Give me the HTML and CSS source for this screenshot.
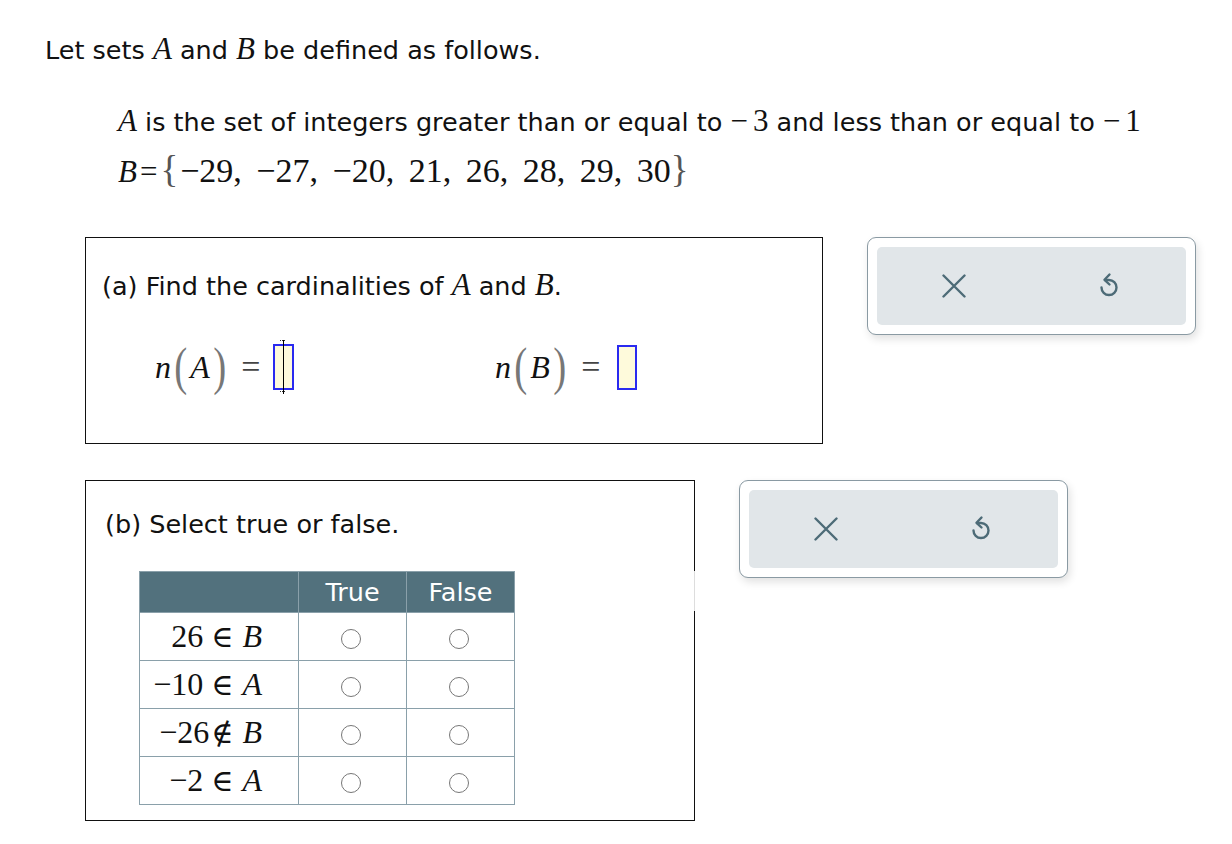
FILE: index.html
```html
<!DOCTYPE html>
<html>
<head>
<meta charset="utf-8">
<link rel="stylesheet" href="styles.css">
</head>
<body>
<div class="page">
  <p class="intro">Let sets <span class="mv">A</span> and <span class="mv">B</span> be defined as follows.</p>
  <div class="defs">
    <p class="def"><span class="mv">A</span> is the set of integers greater than or equal to <span class="mn">−<span class="num">3</span></span> and less than or equal to <span class="mn">−<span class="num">1</span></span></p>
    <p class="def"><span class="mv">B</span><span class="mn eq">=</span><span class="brace">{</span><span class="mn list">−29, −27, −20, 21, 26, 28, 29, 30</span><span class="brace">}</span></p>
  </div>

  <div class="row row-a">
    <div class="qbox qbox-a">
      <p class="qtitle">(a) Find the cardinalities of <span class="mv">A</span> and <span class="mv">B</span>.</p>
      <div class="formulas">
        <div class="formula">
          <span class="mv">n</span><span class="paren">(</span><span class="mv">A</span><span class="paren">)</span><span class="mn eqs">=</span>
          <span class="answer active"><span class="caret"></span></span>
        </div>
        <div class="formula fb">
          <span class="mv">n</span><span class="paren">(</span><span class="mv">B</span><span class="paren">)</span><span class="mn eqs">=</span>
          <span class="answer"></span>
        </div>
      </div>
    </div>
    <div class="tools">
      <div class="tools-inner">
        <button class="tbtn" aria-label="Clear">
          <svg width="24" height="24" viewBox="0 0 24 24"><path d="M1.5 1.5 L22.5 22.5 M22.5 1.5 L1.5 22.5" stroke="#4d6b77" stroke-width="2.4" stroke-linecap="round" fill="none"/></svg>
        </button>
        <button class="tbtn" aria-label="Undo">
          <svg width="24" height="30" viewBox="0 0 24 30"><path d="M8.5 9 H12 A7.5 7.5 0 1 1 4.5 16.5" stroke="#4d6b77" stroke-width="2.4" stroke-linecap="round" fill="none"/><path d="M12.5 3.5 L7.5 8.8 L12.5 13.5" stroke="#4d6b77" stroke-width="2.4" stroke-linecap="round" stroke-linejoin="round" fill="none"/></svg>
        </button>
      </div>
    </div>
  </div>

  <div class="row row-b">
    <div class="qbox qbox-b">
      <p class="qtitle">(b) Select true or false.</p>
      <table class="tf">
        <thead>
          <tr><th class="c0"></th><th class="c1">True</th><th class="c2">False</th></tr>
        </thead>
        <tbody>
          <tr><td class="stmt"><span class="mn">26</span><span class="rel">∈</span><span class="mv">B</span></td><td><span class="radio"></span></td><td><span class="radio"></span></td></tr>
          <tr><td class="stmt"><span class="mn">−10</span><span class="rel">∈</span><span class="mv">A</span></td><td><span class="radio"></span></td><td><span class="radio"></span></td></tr>
          <tr><td class="stmt"><span class="mn">−26</span><span class="rel nr">∉</span><span class="mv">B</span></td><td><span class="radio"></span></td><td><span class="radio"></span></td></tr>
          <tr><td class="stmt"><span class="mn">−2</span><span class="rel">∈</span><span class="mv">A</span></td><td><span class="radio"></span></td><td><span class="radio"></span></td></tr>
        </tbody>
      </table>
      <span class="edge-mark"></span>
    </div>
    <div class="tools">
      <div class="tools-inner">
        <button class="tbtn" aria-label="Clear">
          <svg width="24" height="24" viewBox="0 0 24 24"><path d="M1.5 1.5 L22.5 22.5 M22.5 1.5 L1.5 22.5" stroke="#4d6b77" stroke-width="2.4" stroke-linecap="round" fill="none"/></svg>
        </button>
        <button class="tbtn" aria-label="Undo">
          <svg width="24" height="30" viewBox="0 0 24 30"><path d="M8.5 9 H12 A7.5 7.5 0 1 1 4.5 16.5" stroke="#4d6b77" stroke-width="2.4" stroke-linecap="round" fill="none"/><path d="M12.5 3.5 L7.5 8.8 L12.5 13.5" stroke="#4d6b77" stroke-width="2.4" stroke-linecap="round" stroke-linejoin="round" fill="none"/></svg>
        </button>
      </div>
    </div>
  </div>
</div>
</body>
</html>
```

FILE: styles.css
```css
* { box-sizing: border-box; }
html, body { margin: 0; padding: 0; background: #fff; }
body {
  font-family: "DejaVu Sans", Verdana, sans-serif;
  font-size: 25.5px;
  color: #111;
}
p { margin: 0; }
.page { padding: 34px 0 0 45px; }

.mv {
  font-family: "Liberation Serif", "DejaVu Serif", serif;
  font-style: italic;
  font-size: 31px;
}
.mn {
  font-family: "Liberation Serif", "DejaVu Serif", serif;
  font-size: 31px;
}
.num { margin-left: 5px; }
.rel {
  font-family: "DejaVu Serif", "Liberation Serif", serif;
  font-size: 30px;
  margin: 0 9px 0 8px;
}
.rel.nr { margin-left: 2px; }

.intro { line-height: 30px; }

.defs { padding: 41px 0 0 73px; }
.def { line-height: 30px; }
.def + .def { margin-top: 18px; }
.def .eq { margin: 0 3px 0 3px; }
.list { word-spacing: 6px; margin-left: 2px; font-size: 34px; }
.brace {
  font-family: "Liberation Serif", serif;
  font-size: 37px;
  color: #555;
}

.row { display: flex; align-items: flex-start; gap: 44px; margin-left: 40px; }
.row-a { margin-top: 49px; }
.row-b { margin-top: 36px; }

.qbox {
  border: 1px solid #111;
  position: relative;
}
.qbox-a { width: 738px; height: 207px; padding: 32px 0 0 16px; }
.qbox-b { width: 610px; height: 341px; padding: 28px 0 0 19px; }

.qtitle { line-height: 30px; }

.formulas {
  display: grid;
  grid-template-columns: 340px auto;
  padding: 39px 0 0 53px;
}
.formula { display: flex; align-items: center; height: 54px; }
.formula .mv { font-size: 32px; }
.paren {
  font-family: "Liberation Serif", serif;
  font-size: 52px;
  color: #777;
  margin: 0 1px;
  transform: scaleX(0.75);
  display: inline-block;
  line-height: 54px;
}
.fb .paren { margin: 0 1px; }
.eqs { margin: 0 13px 0 12px; color: #444; font-size: 34px; }
.fb .eqs { margin: 0 17px 0 12px; }
.answer {
  display: inline-block;
  width: 20px;
  height: 45px;
  border: 2px solid #2a2af0;
  background: #fefadb;
  position: relative;
}
.answer.active { width: 21px; height: 46px; }
.caret {
  position: absolute;
  left: 8px;
  top: -6px;
  width: 1px;
  height: 54px;
  border-left: 1.5px solid #000;
}
.caret::before, .caret::after {
  content: "";
  position: absolute;
  left: -4px;
  width: 5px;
  height: 2px;
  border-top: 1px dotted #333;
}
.caret::before { top: 0; }
.caret::after { bottom: 0; }

.tools {
  width: 329px;
  height: 98px;
  border: 1px solid #8a9aa3;
  border-radius: 9px;
  background: #fff;
  padding: 9px;
  box-shadow: 2px 4px 8px rgba(0,0,0,0.12);
}
.tools-inner {
  display: flex;
  height: 100%;
  background: #e1e6e9;
  border-radius: 5px;
}
.tbtn {
  flex: 1;
  border: 0;
  background: transparent;
  display: flex;
  align-items: center;
  justify-content: center;
  padding: 0;
  cursor: pointer;
}
.tbtn svg { display: block; }

.tf {
  border-collapse: collapse;
  margin: 32px 0 0 34px;
}
.tf th {
  background: #52717d;
  color: #fff;
  font-weight: normal;
  font-size: 25.5px;
  height: 41px;
  padding: 0;
  border: 1px solid #8aa0aa;
  text-align: center;
}
.tf .c0 { width: 159px; }
.tf .c1 { width: 108px; }
.tf .c2 { width: 108px; }
.tf td {
  border: 1px solid #8aa0aa;
  height: 48px;
  text-align: center;
  padding: 0;
}
.tf td.stmt { white-space: nowrap; text-align: right; padding-right: 36px; }
.tf .mn, .tf .mv { font-size: 32px; }
.radio {
  display: inline-block;
  width: 20px;
  height: 20px;
  border: 1.5px solid #777;
  border-radius: 50%;
  vertical-align: middle;
  margin-right: 4px;
}
.edge-mark {
  position: absolute;
  right: -1px;
  top: 90px;
  width: 1px;
  height: 40px;
  background: #ddd;
}
```
